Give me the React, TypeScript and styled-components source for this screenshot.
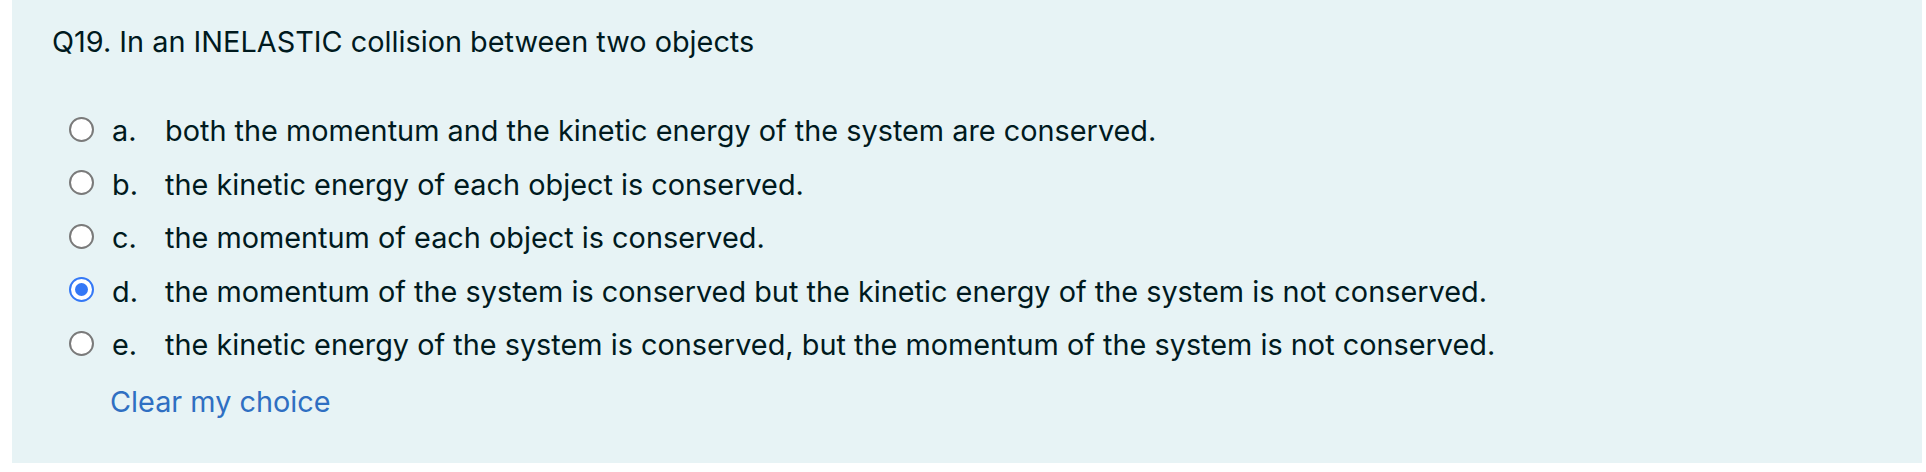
import React from "react";
import styled, { createGlobalStyle } from "styled-components";

const Global = createGlobalStyle`
  html, body { margin: 0; padding: 0; background: #ffffff; }
  body { font-family: Inter, "Noto Sans", "Liberation Sans", sans-serif; }
`;

const Panel = styled.div`
  box-sizing: border-box;
  margin-left: 12px;
  width: 1910px;
  height: 463px;
  background: #e7f3f5;
  color: #001a1e;
  padding: 19px 0 0 40px;
  font-size: 28.85px;
  line-height: 45px;
`;

const QText = styled.div`
  margin: 0;
`;

const Answers = styled.div`
  margin-top: 40px;
  padding-left: 17px;
  display: flex;
  flex-direction: column;
`;

const Row = styled.label`
  display: flex;
  align-items: center;
  height: 53.5px;
  cursor: pointer;
`;

const Radio = styled.span<{ $checked?: boolean }>`
  box-sizing: border-box;
  flex: none;
  width: 25px;
  height: 25px;
  border-radius: 50%;
  margin-top: -3px;
  margin-right: 18px;
  background: #ffffff;
  border: ${(p) => (p.$checked ? "2.5px solid #3478f6" : "2px solid #7a7a7a")};
  display: flex;
  align-items: center;
  justify-content: center;
  &::after {
    content: "";
    display: ${(p) => (p.$checked ? "block" : "none")};
    width: 13px;
    height: 13px;
    border-radius: 50%;
    background: #3478f6;
  }
`;

const Num = styled.span`
  flex: none;
  width: 53px;
`;

const Text = styled.span``;

const Clear = styled.a`
  display: block;
  margin-top: 7px;
  padding-left: 41px;
  color: #2f6fc2;
  text-decoration: none;
`;

const options = [
  { n: "a.", t: "both the momentum and the kinetic energy of the system are conserved." },
  { n: "b.", t: "the kinetic energy of each object is conserved." },
  { n: "c.", t: "the momentum of each object is conserved." },
  { n: "d.", t: "the momentum of the system is conserved but the kinetic energy of the system is not conserved.", checked: true },
  { n: "e.", t: "the kinetic energy of the system is conserved, but the momentum of the system is not conserved." },
];

export default function App() {
  return (
    <>
      <Global />
      <Panel>
        <QText>Q19. In an INELASTIC collision between two objects</QText>
        <Answers>
          {options.map((o) => (
            <Row key={o.n}>
              <Radio $checked={o.checked} />
              <Num>{o.n}</Num>
              <Text>{o.t}</Text>
            </Row>
          ))}
          <Clear href="#">Clear my choice</Clear>
        </Answers>
      </Panel>
    </>
  );
}
